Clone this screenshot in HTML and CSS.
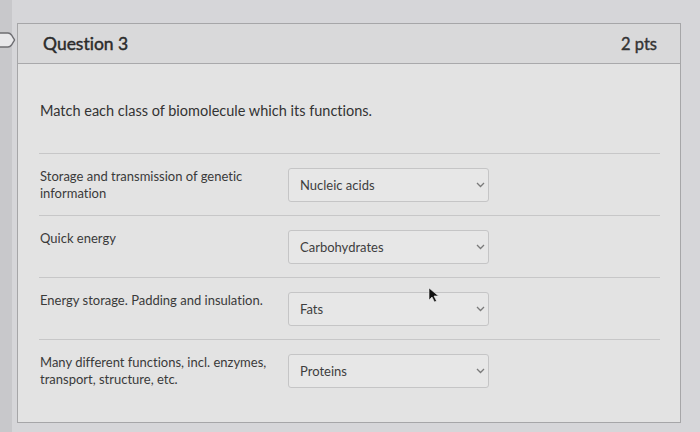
FILE: index.html
```html
<!DOCTYPE html>
<html>
<head>
<meta charset="utf-8">
<link rel="stylesheet" href="styles.css">
</head>
<body>
<div class="strip">
  <svg class="tab" width="16" height="18" viewBox="0 0 16 18"><path d="M-2 2 H8 Q10 2 11.5 4 L14 8 Q15 9 14 10 L11.5 14 Q10 16 8 16 H-2" fill="#e8e8ea" stroke="#6d6d72" stroke-width="1.4"/></svg>
</div>
<div class="main">
  <div class="card">
    <div class="head">
      <span class="title">Question 3</span>
      <span class="pts">2 pts</span>
    </div>
    <div class="body">
      <p class="intro">Match each class of biomolecule which its functions.</p>
      <div class="row">
        <div class="label">Storage and transmission of genetic information</div>
        <div class="select"><span>Nucleic acids</span><svg class="chev" width="9" height="6" viewBox="0 0 9 6"><path d="M1 1 L4.5 4.5 L8 1" fill="none" stroke="#7a7a7a" stroke-width="1.3"/></svg></div>
      </div>
      <div class="row">
        <div class="label">Quick energy</div>
        <div class="select"><span>Carbohydrates</span><svg class="chev" width="9" height="6" viewBox="0 0 9 6"><path d="M1 1 L4.5 4.5 L8 1" fill="none" stroke="#7a7a7a" stroke-width="1.3"/></svg></div>
      </div>
      <div class="row">
        <div class="label">Energy storage. Padding and insulation.</div>
        <div class="select"><span>Fats</span><svg class="chev" width="9" height="6" viewBox="0 0 9 6"><path d="M1 1 L4.5 4.5 L8 1" fill="none" stroke="#7a7a7a" stroke-width="1.3"/></svg></div>
      </div>
      <div class="row">
        <div class="label">Many different functions, incl. enzymes, transport, structure, etc.</div>
        <div class="select"><span>Proteins</span><svg class="chev" width="9" height="6" viewBox="0 0 9 6"><path d="M1 1 L4.5 4.5 L8 1" fill="none" stroke="#7a7a7a" stroke-width="1.3"/></svg></div>
      </div>
    </div>
  </div>
</div>
<svg class="cursor" width="12" height="16" viewBox="0 0 12 16"><path d="M1 1 L1 13 L4 10 L6.5 15 L8.5 14 L6 9 L10.5 9 Z" fill="#111" stroke="#eee" stroke-width="0.6"/></svg>
</body>
</html>
```
FILE: styles.css
```css
html, body {
  margin: 0;
  padding: 0;
}
body {
  width: 700px;
  height: 432px;
  overflow: hidden;
  display: flex;
  background: #d6d6d9;
  font-family: Lato, "Open Sans", sans-serif;
  font-variant-ligatures: none;
  color: #3c3c3c;
  position: relative;
}
.strip {
  width: 12px;
  flex: none;
  background: #c8c8cb;
  padding-top: 31px;
  box-sizing: border-box;
}
.tab {
  display: block;
}
.main {
  flex: 1;
  padding: 23px 19px 9px 5px;
}
.card {
  height: 400px;
  box-sizing: border-box;
  border: 1px solid #a6a6a8;
  background: #e3e3e3;
  display: flex;
  flex-direction: column;
}
.head {
  height: 40px;
  box-sizing: border-box;
  border-bottom: 1px solid #a9a9ab;
  background: #d9d9da;
  display: flex;
  align-items: center;
  justify-content: space-between;
  padding: 0 23px 0 25px;
}
.title {
  font-size: 17.5px;
  font-weight: normal;
  -webkit-text-stroke: 0.45px #2b2b2b;
  color: #2b2b2b;
}
.pts {
  font-size: 16.5px;
  font-weight: normal;
  -webkit-text-stroke: 0.4px #333;
  color: #333;
}
.body {
  padding: 37px 20px 0 21px;
}
.intro {
  margin: 0 0 32px 1px;
  font-size: 14.5px;
  line-height: 20px;
  color: #333;
}
.row {
  border-top: 1px solid #c7c7c8;
  padding: 14px 0 13px 0;
  display: grid;
  grid-template-columns: 240px 201px;
  column-gap: 9px;
  align-items: start;
}
.label {
  font-size: 13px;
  line-height: 17px;
  color: #3a3a3a;
  padding-left: 1px;
}
.select {
  height: 34px;
  box-sizing: border-box;
  border: 1px solid #c5c5c6;
  border-radius: 3px;
  background: #e7e7e7;
  display: flex;
  align-items: center;
  justify-content: space-between;
  padding: 0 3px 0 11px;
  font-size: 13px;
  color: #3e3e3e;
}
.chev {
  display: block;
}
.cursor {
  position: absolute;
  left: 428px;
  top: 287px;
}
```
